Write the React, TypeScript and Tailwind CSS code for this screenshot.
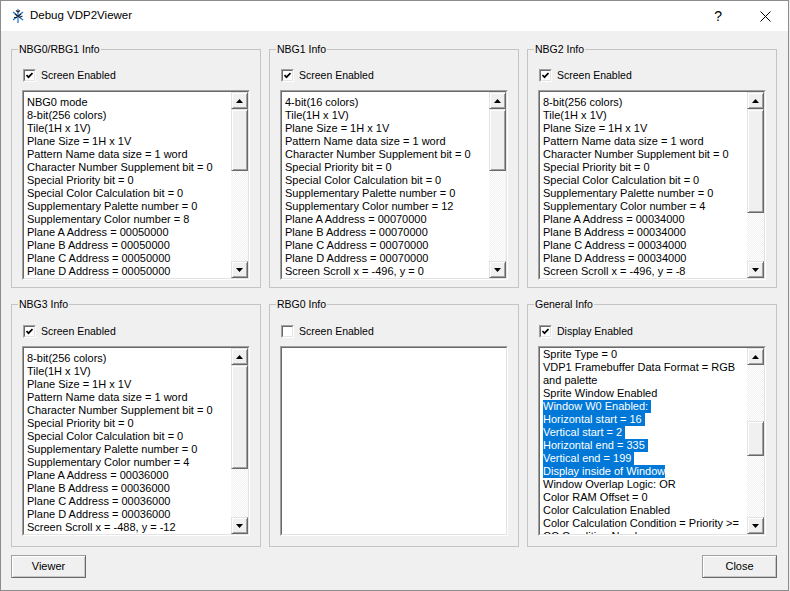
import React from "react";

type Line = string | { text: string; selected: true };

const nbg0Lines: Line[] = [
  "NBG0 mode",
  "8-bit(256 colors)",
  "Tile(1H x 1V)",
  "Plane Size = 1H x 1V",
  "Pattern Name data size = 1 word",
  "Character Number Supplement bit = 0",
  "Special Priority bit = 0",
  "Special Color Calculation bit = 0",
  "Supplementary Palette number = 0",
  "Supplementary Color number = 8",
  "Plane A Address = 00050000",
  "Plane B Address = 00050000",
  "Plane C Address = 00050000",
  "Plane D Address = 00050000",
];

const nbg1Lines: Line[] = [
  "4-bit(16 colors)",
  "Tile(1H x 1V)",
  "Plane Size = 1H x 1V",
  "Pattern Name data size = 1 word",
  "Character Number Supplement bit = 0",
  "Special Priority bit = 0",
  "Special Color Calculation bit = 0",
  "Supplementary Palette number = 0",
  "Supplementary Color number = 12",
  "Plane A Address = 00070000",
  "Plane B Address = 00070000",
  "Plane C Address = 00070000",
  "Plane D Address = 00070000",
  "Screen Scroll x = -496, y = 0",
];

const nbg2Lines: Line[] = [
  "8-bit(256 colors)",
  "Tile(1H x 1V)",
  "Plane Size = 1H x 1V",
  "Pattern Name data size = 1 word",
  "Character Number Supplement bit = 0",
  "Special Priority bit = 0",
  "Special Color Calculation bit = 0",
  "Supplementary Palette number = 0",
  "Supplementary Color number = 4",
  "Plane A Address = 00034000",
  "Plane B Address = 00034000",
  "Plane C Address = 00034000",
  "Plane D Address = 00034000",
  "Screen Scroll x = -496, y = -8",
];

const nbg3Lines: Line[] = [
  "8-bit(256 colors)",
  "Tile(1H x 1V)",
  "Plane Size = 1H x 1V",
  "Pattern Name data size = 1 word",
  "Character Number Supplement bit = 0",
  "Special Priority bit = 0",
  "Special Color Calculation bit = 0",
  "Supplementary Palette number = 0",
  "Supplementary Color number = 4",
  "Plane A Address = 00036000",
  "Plane B Address = 00036000",
  "Plane C Address = 00036000",
  "Plane D Address = 00036000",
  "Screen Scroll x = -488, y = -12",
];

const generalLines: Line[] = [
  "Sprite Type = 0",
  "VDP1 Framebuffer Data Format = RGB",
  "and palette",
  "Sprite Window Enabled",
  { text: "Window W0 Enabled: ", selected: true },
  { text: "Horizontal start = 16 ", selected: true },
  { text: "Vertical start = 2 ", selected: true },
  { text: "Horizontal end = 335 ", selected: true },
  { text: "Vertical end = 199 ", selected: true },
  { text: "Display inside of Window", selected: true },
  "Window Overlap Logic: OR",
  "Color RAM Offset = 0",
  "Color Calculation Enabled",
  "Color Calculation Condition = Priority >=",
  "CC Condition Number",
];

function Arrow({ down }: { down?: boolean }) {
  return (
    <svg width="7" height="4" viewBox="0 0 7 4">
      <polygon points={down ? "0,0 7,0 3.5,4" : "3.5,0 7,4 0,4"} fill="#000" />
    </svg>
  );
}

function ScrollButton({ down }: { down?: boolean }) {
  return (
    <div className="flex h-[17px] w-[17px] items-center justify-center border border-t-[#e3e3e3] border-l-[#e3e3e3] border-r-[#696969] border-b-[#696969] bg-[#f0f0f0] shadow-[inset_1px_1px_0_#fff,inset_-1px_-1px_0_#a0a0a0]">
      <Arrow down={down} />
    </div>
  );
}

function ScrollBar({ thumbTop, thumbHeight }: { thumbTop: number; thumbHeight: number }) {
  return (
    <div className="flex w-[17px] shrink-0 flex-col">
      <ScrollButton />
      <div className="flex-1 bg-[repeating-conic-gradient(#f0f0f0_0_25%,#fff_0_50%)] bg-[length:2px_2px]">
        <div
          className="w-[17px] border border-t-[#e3e3e3] border-l-[#e3e3e3] border-r-[#696969] border-b-[#696969] bg-[#f0f0f0] shadow-[inset_1px_1px_0_#fff,inset_-1px_-1px_0_#a0a0a0]"
          style={{ marginTop: thumbTop, height: thumbHeight }}
        />
      </div>
      <ScrollButton down />
    </div>
  );
}

function ListBox({
  lines,
  scroll,
  top = 4,
}: {
  lines: Line[];
  scroll?: { top: number; height: number };
  top?: number;
}) {
  return (
    <div className="h-[190px] w-[228px] border border-t-[#a0a0a0] border-l-[#a0a0a0] border-r-white border-b-white">
      <div className="flex h-full border border-t-[#696969] border-l-[#696969] border-r-[#e3e3e3] border-b-[#e3e3e3] bg-white">
        <div
          className="flex-1 overflow-hidden whitespace-nowrap pl-[3px] text-[11px] leading-[13px] text-black"
          style={{ paddingTop: top }}
        >
          {lines.map((line, i) =>
            typeof line === "string" ? (
              <div key={i} className="h-[13px]">
                {line}
              </div>
            ) : (
              <div key={i} className="h-[13px]">
                <span className="inline-block h-[13px] whitespace-pre bg-[#0078d7] align-top text-white">
                  {line.text}
                </span>
              </div>
            )
          )}
        </div>
        {scroll && <ScrollBar thumbTop={scroll.top} thumbHeight={scroll.height} />}
      </div>
    </div>
  );
}

function CheckBox({ checked, label }: { checked: boolean; label: string }) {
  return (
    <div className="ml-px flex h-[13px] items-center gap-[5px]">
      <span className="flex h-[13px] w-[13px] shrink-0 items-center justify-center border border-t-[#a0a0a0] border-l-[#a0a0a0] border-r-white border-b-white">
        <span className="flex h-[11px] w-[11px] items-center justify-center border border-t-[#696969] border-l-[#696969] border-r-[#e3e3e3] border-b-[#e3e3e3] bg-white">
          {checked && (
            <svg width="7" height="7" viewBox="0 0 7 7">
              <polyline points="0.5,3 2.5,5.2 6.5,1" fill="none" stroke="#000" strokeWidth="1.7" />
            </svg>
          )}
        </span>
      </span>
      <span className="text-[10.5px] leading-[13px]">{label}</span>
    </div>
  );
}

function Group({
  title,
  checked,
  label = "Screen Enabled",
  lines,
  scroll,
  top,
  bottom,
}: {
  title: string;
  checked: boolean;
  label?: string;
  lines: Line[];
  scroll?: { top: number; height: number };
  top?: number;
  bottom: "row1" | "row2";
}) {
  return (
    <fieldset
      className={
        bottom === "row1"
          ? "w-[250px] border border-[#c4c4c4] px-[6px] pt-[12px] pb-[7px]"
          : "w-[250px] border border-[#c4c4c4] px-[6px] pt-[13px] pb-[10px]"
      }
    >
      <legend className="px-px text-[10.5px] leading-[15px]">{title}</legend>
      <div className="mx-[4px]">
        <CheckBox checked={checked} label={label} />
        <div className="mt-[8px]">
          <ListBox lines={lines} scroll={scroll} top={top} />
        </div>
      </div>
    </fieldset>
  );
}

function AppIcon() {
  return (
    <svg width="16" height="16" viewBox="0 0 16 16">
      <g stroke="#1e6fd0" strokeWidth="1.2" fill="none">
        <line x1="8" y1="1" x2="8" y2="15" />
        <line x1="3" y1="4" x2="13" y2="12" />
        <line x1="3" y1="12" x2="13" y2="4" />
      </g>
      <g stroke="#222" strokeWidth="1.1" fill="none">
        <path d="M5 6 L8 8.5 L11 6" />
        <path d="M4 9.5 L7 9.5" />
        <path d="M9 9.5 L12.5 8" />
        <path d="M6 2.5 L8 4 L10 2.5" />
      </g>
    </svg>
  );
}

function WinButton({ children }: { children: React.ReactNode }) {
  return (
    <button className="h-[23px] w-[75px] border border-t-[#a0a0a0] border-l-[#a0a0a0] border-r-[#696969] border-b-[#696969] bg-[#f0f0f0] text-[11px] leading-[13px] text-black shadow-[inset_1px_1px_0_#fff,inset_-1px_-1px_0_#c8c8c8]">
      {children}
    </button>
  );
}

export default function App() {
  return (
    <div className="h-[591px] w-[790px] bg-[#f0f0f0] font-['Liberation_Sans',Arial,sans-serif] text-black">
      <div className="flex h-[591px] w-[789px] flex-col border border-[#8c8c8c] bg-[#f0f0f0]">
        <div className="flex h-[30px] shrink-0 items-center bg-white pl-[9px]">
          <AppIcon />
          <span className="ml-[4px] text-[11.5px]">Debug VDP2Viewer</span>
          <span className="ml-auto mr-[38px] text-[14px]">?</span>
          <svg width="11" height="11" viewBox="0 0 11 11" className="mr-[17px]">
            <path d="M0.5 0.5 L10.5 10.5 M10.5 0.5 L0.5 10.5" stroke="#000" strokeWidth="1" />
          </svg>
        </div>

        <div className="flex flex-1 flex-col px-[10px] pt-[11px]">
          <div className="flex gap-[8px]">
            <Group title="NBG0/RBG1 Info" checked lines={nbg0Lines} scroll={{ top: 0, height: 62 }} bottom="row1" />
            <Group title="NBG1 Info" checked lines={nbg1Lines} scroll={{ top: 0, height: 62 }} bottom="row1" />
            <Group title="NBG2 Info" checked lines={nbg2Lines} scroll={{ top: 0, height: 104 }} bottom="row1" />
          </div>
          <div className="mt-[9px] flex gap-[8px]">
            <Group title="NBG3 Info" checked lines={nbg3Lines} scroll={{ top: 0, height: 104 }} bottom="row2" />
            <Group title="RBG0 Info" checked={false} lines={[]} bottom="row2" />
            <Group
              title="General Info"
              checked
              label="Display Enabled"
              lines={generalLines}
              scroll={{ top: 56, height: 35 }}
              top={0}
              bottom="row2"
            />
          </div>
          <div className="mt-[8px] flex w-[766px] justify-between">
            <WinButton>Viewer</WinButton>
            <WinButton>Close</WinButton>
          </div>
        </div>
      </div>
    </div>
  );
}
